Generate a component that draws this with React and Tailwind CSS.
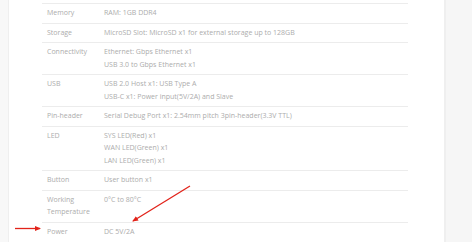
const specs = [
  { label: 'Memory', value: ['RAM: 1GB DDR4'] },
  { label: 'Storage', value: ['MicroSD Slot: MicroSD x1 for external storage up to 128GB'] },
  { label: 'Connectivity', value: ['Ethernet: Gbps Ethernet x1', 'USB 3.0 to Gbps Ethernet x1'] },
  { label: 'USB', value: ['USB 2.0 Host x1: USB Type A', 'USB-C x1: Power input(5V/2A) and Slave'] },
  { label: 'Pin-header', value: ['Serial Debug Port x1: 2.54mm pitch 3pin-header(3.3V TTL)'] },
  { label: 'LED', value: ['SYS LED(Red) x1', 'WAN LED(Green) x1', 'LAN LED(Green) x1'] },
  { label: 'Button', value: ['User button x1'] },
  { label: 'Working Temperature', value: ['0°C to 80°C'] },
  { label: 'Power', value: ['DC 5V/2A'], last: true },
];

function Arrows() {
  return (
    <svg className="absolute left-0 top-0 pointer-events-none" width="474" height="245">
      <defs>
        <marker id="head" markerWidth="6" markerHeight="6" refX="5" refY="3" orient="auto" markerUnits="userSpaceOnUse">
          <path d="M0,0.5 L6,3 L0,5.5 Z" fill="#e2231a" />
        </marker>
      </defs>
      <line x1="15" y1="228.5" x2="40" y2="228.5" stroke="#e2231a" strokeWidth="1.3" markerEnd="url(#head)" />
      <line x1="190" y1="186" x2="133" y2="221" stroke="#e2231a" strokeWidth="1.3" markerEnd="url(#head)" />
    </svg>
  );
}

export default function App() {
  return (
    <div className="relative w-[474px] h-[245px] overflow-hidden bg-white font-['Open_Sans',sans-serif]">
      <div className="flex h-[242px]">
        <div className="w-[9px] bg-[#f8f8f8] border-r border-[#efefef]" />
        <div className="flex-1 bg-white pl-[33px] pr-[36px] pt-[3px]">
          <div className="border-t border-[#ececec]">
            {specs.map((s) => (
              <div
                key={s.label}
                className={`flex text-[7px] leading-[12.5px] text-[#acacac] py-[3px] ${s.last ? '' : 'border-b border-[#ececec]'}`}
              >
                <div className="w-[62px] pl-[5px] pr-[4px] shrink-0">{s.label}</div>
                <div>
                  {s.value.map((v) => (
                    <div key={v}>{v}</div>
                  ))}
                </div>
              </div>
            ))}
          </div>
        </div>
        <div className="w-[28px] bg-[#f6f6f6] border-l-2 border-[#efefef] mr-[2px]" />
      </div>
      <Arrows />
    </div>
  );
}
